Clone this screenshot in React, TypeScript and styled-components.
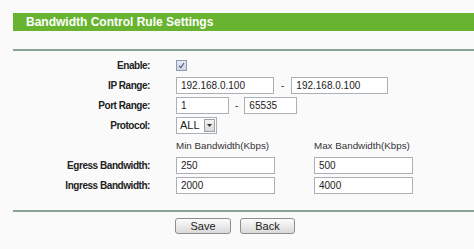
import * as React from 'react';
import styled, { createGlobalStyle } from 'styled-components';

const GlobalStyle = createGlobalStyle`
  html, body {
    margin: 0;
    padding: 0;
    background: #fafafa;
    font-family: "Liberation Sans", Arial, sans-serif;
  }
`;

const Page = styled.div`
  width: 474px;
  height: 249px;
  padding: 13px 0 0 13px;
  box-sizing: border-box;
  background: #fafafa;
  overflow: hidden;
`;

const TitleBar = styled.div`
  height: 18px;
  background: #68b431;
  color: #ffffff;
  font-size: 12px;
  font-weight: bold;
  line-height: 18px;
  padding-left: 13px;
`;

const Rule = styled.div<{ top: number }>`
  height: 2px;
  background: #88a596;
  margin-top: ${p => p.top}px;
`;

const Form = styled.div`
  display: grid;
  grid-template-columns: 137px 1fr;
  grid-auto-rows: 20px;
  column-gap: 26px;
  padding-top: 4px;
  align-items: center;
`;

const Label = styled.div`
  text-align: right;
  font-size: 10px;
  letter-spacing: -0.45px;
  font-weight: bold;
  color: #222;
`;

const Field = styled.div`
  display: flex;
  align-items: center;
  font-size: 10px;
  color: #222;
`;

const Input = styled.div<{ w: number }>`
  width: ${p => p.w}px;
  height: 17px;
  box-sizing: border-box;
  border: 1px solid #a9b0b8;
  background: #ffffff;
  font-size: 10px;
  line-height: 15px;
  padding-left: 4px;
  color: #222;
`;

const Dash = styled.span<{ gap: number }>`
  padding: 0 ${p => p.gap}px;
  font-size: 10px;
  color: #333;
`;

const Check = styled.span`
  width: 11px;
  height: 11px;
  box-sizing: border-box;
  border: 1px solid #8e9bb0;
  background: linear-gradient(#e4e8f0, #cfd6e2);
  display: flex;
  align-items: center;
  justify-content: center;
`;

const Select = styled.div`
  width: 41px;
  height: 17px;
  box-sizing: border-box;
  border: 1px solid #a9b0b8;
  background: #fff;
  display: flex;
  align-items: center;
  justify-content: space-between;
  padding: 0 1px 0 3px;
  font-size: 11px;
  color: #222;
`;

const Arrow = styled.span`
  width: 11px;
  height: 13px;
  box-sizing: border-box;
  border: 1px solid #9aa1aa;
  background: linear-gradient(#f4f4f4, #d8d8d8);
  display: flex;
  align-items: center;
  justify-content: center;
`;

const Columns = styled.div`
  display: grid;
  grid-template-columns: 138px 1fr;
  align-items: center;
`;

const ColHead = styled.div`
  font-size: 9.8px;
  color: #333;
`;

const Buttons = styled.div`
  display: flex;
  gap: 9px;
  margin: 6px 0 0 162px;
`;

const Button = styled.button<{ w: number }>`
  width: ${p => p.w}px;
  height: 16px;
  padding: 0;
  border: 1px solid #8d8d8d;
  border-radius: 3px;
  background: linear-gradient(#fbfbfb, #dadada);
  font-family: "Liberation Sans", Arial, sans-serif;
  font-size: 11px;
  color: #222;
  line-height: 14px;
`;

export default function App() {
  return (
    <Page>
      <GlobalStyle />
      <TitleBar>Bandwidth Control Rule Settings</TitleBar>
      <Rule top={18} />
      <Form>
        <Label>Enable:</Label>
        <Field>
          <Check>
            <svg width="7" height="7" viewBox="0 0 7 7">
              <path d="M1 3.8 L2.8 5.6 L6 1" fill="none" stroke="#4a5f8a" strokeWidth="1.2" />
            </svg>
          </Check>
        </Field>

        <Label>IP Range:</Label>
        <Field>
          <Input w={98}>192.168.0.100</Input>
          <Dash gap={7}>-</Dash>
          <Input w={97}>192.168.0.100</Input>
        </Field>

        <Label>Port Range:</Label>
        <Field>
          <Input w={53}>1</Input>
          <Dash gap={6}>-</Dash>
          <Input w={53}>65535</Input>
        </Field>

        <Label>Protocol:</Label>
        <Field>
          <Select>
            ALL
            <Arrow>
              <svg width="5" height="3" viewBox="0 0 5 3">
                <path d="M0 0 H5 L2.5 3 Z" fill="#333" />
              </svg>
            </Arrow>
          </Select>
        </Field>

        <Label />
        <Columns>
          <ColHead>Min Bandwidth(Kbps)</ColHead>
          <ColHead>Max Bandwidth(Kbps)</ColHead>
        </Columns>

        <Label>Egress Bandwidth:</Label>
        <Columns>
          <Input w={99}>250</Input>
          <Input w={99}>500</Input>
        </Columns>

        <Label>Ingress Bandwidth:</Label>
        <Columns>
          <Input w={99}>2000</Input>
          <Input w={99}>4000</Input>
        </Columns>
      </Form>
      <Rule top={15} />
      <Buttons>
        <Button w={56}>Save</Button>
        <Button w={55}>Back</Button>
      </Buttons>
    </Page>
  );
}
